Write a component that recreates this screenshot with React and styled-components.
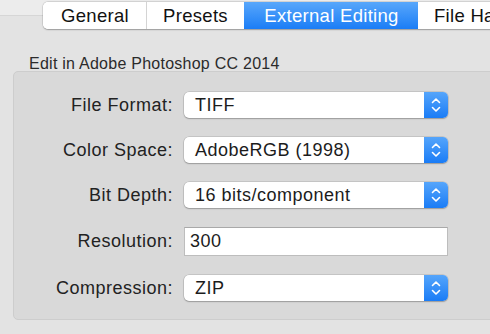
import React from 'react';
import styled, { createGlobalStyle } from 'styled-components';

const GlobalStyle = createGlobalStyle`
    html, body {
        margin: 0;
        padding: 0;
        background: #ececec;
        font-family: "Liberation Sans", Arial, sans-serif;
        -webkit-font-smoothing: antialiased;
    }
`

const Window = styled.div`
    width: 490px;
    height: 334px;
    overflow: hidden;
    background: #ececec;
    display: flex;
    flex-direction: column;
`

const TabBar = styled.div`
    display: flex;
    margin: 2px 0 0 43px;
    height: 27px;
    position: relative;
    z-index: 1;
    width: max-content;
    border-radius: 5px 0 0 5px;
    box-shadow: 0 0.5px 1.5px rgba(0,0,0,.28), 0 0 0 0.5px rgba(0,0,0,.12);
    background: #fff;
`

const Tab = styled.div`
    box-sizing: border-box;
    width: ${p => p.w}px;
    height: 27px;
    display: flex;
    align-items: center;
    justify-content: ${p => p.left ? 'flex-start' : 'center'};
    padding-left: ${p => p.left ? '15px' : '0'};
    font-size: 18.5px;
    letter-spacing: 0.3px;
    color: ${p => p.active ? '#fff' : '#111'};
    background: ${p => p.active ? 'linear-gradient(#58a7fb, #1b7df6)' : '#fff'};
    border-left: 1px solid ${p => p.first || p.active || p.afterActive ? 'transparent' : '#d4d4d4'};
    white-space: nowrap;
    &:first-child {
        border-radius: 5px 0 0 5px;
    }
`

const Panel = styled.div`
    flex: 1;
    margin-top: -14px;
    background: #e3e3e3;
    border-top: 1px solid #d6d6d6;
    padding-top: 39px;
`

const GroupTitle = styled.div`
    margin-left: 29px;
    font-size: 16px;
    letter-spacing: 0.25px;
    color: #2b2b2b;
    line-height: 18px;
`

const GroupBox = styled.div`
    margin: -2px -20px 0 13px;
    height: 249px;
    box-sizing: border-box;
    background: #d9d9d9;
    border: 1px solid #cdcdcd;
    border-radius: 5px;
    padding-top: 20px;
    display: grid;
    grid-template-columns: 159px 264px;
    column-gap: 11px;
    row-gap: 19px;
    align-content: start;
    align-items: center;
`

const Label = styled.div`
    text-align: right;
    font-size: 18px;
    letter-spacing: 0.5px;
    color: #222;
`

const Popup = styled.div`
    height: 26px;
    box-sizing: border-box;
    background: #fff;
    border-radius: 5px;
    box-shadow: 0 0 0 0.5px rgba(0,0,0,.18), 0 1px 1.5px rgba(0,0,0,.22);
    display: flex;
    align-items: center;
    padding-left: 11px;
    font-size: 18px;
    letter-spacing: 0.5px;
    color: #1c1c1c;
`

const Stepper = styled.div`
    margin-left: auto;
    width: 24px;
    height: 26px;
    border-radius: 0 5px 5px 0;
    background: linear-gradient(#55a5fb, #1a7cf6);
    display: flex;
    align-items: center;
    justify-content: center;
`

const TextField = styled.div`
    height: 29px;
    box-sizing: border-box;
    background: #fff;
    border: 1px solid #bdbdbd;
    border-top-color: #a9a9a9;
    display: flex;
    align-items: center;
    padding-left: 5px;
    font-size: 18px;
    letter-spacing: 0.5px;
    color: #1c1c1c;
`

const Chevrons = () => (
    <svg width="10" height="16" viewBox="0 0 10 16" fill="none" stroke="#fff" strokeWidth="1.6" strokeLinecap="round" strokeLinejoin="round">
        <path d="M1.5 5.5 L5 2 L8.5 5.5" />
        <path d="M1.5 10.5 L5 14 L8.5 10.5" />
    </svg>
)

const rows = [
    { label: 'File Format:', value: 'TIFF' },
    { label: 'Color Space:', value: 'AdobeRGB (1998)' },
    { label: 'Bit Depth:', value: '16 bits/component' },
    { label: 'Resolution:', value: '300', field: true },
    { label: 'Compression:', value: 'ZIP' },
]

export default function App() {
    return (
        <Window>
            <GlobalStyle />
            <TabBar>
                <Tab w={103} first>General</Tab>
                <Tab w={98}>Presets</Tab>
                <Tab w={174} active>External Editing</Tab>
                <Tab w={120} left afterActive>File Handling</Tab>
            </TabBar>
            <Panel>
                <GroupTitle>Edit in Adobe Photoshop CC 2014</GroupTitle>
                <GroupBox>
                    {rows.map(r => (
                        <React.Fragment key={r.label}>
                            <Label>{r.label}</Label>
                            {r.field ? (
                                <TextField>{r.value}</TextField>
                            ) : (
                                <Popup>
                                    {r.value}
                                    <Stepper><Chevrons /></Stepper>
                                </Popup>
                            )}
                        </React.Fragment>
                    ))}
                </GroupBox>
            </Panel>
        </Window>
    );
}
